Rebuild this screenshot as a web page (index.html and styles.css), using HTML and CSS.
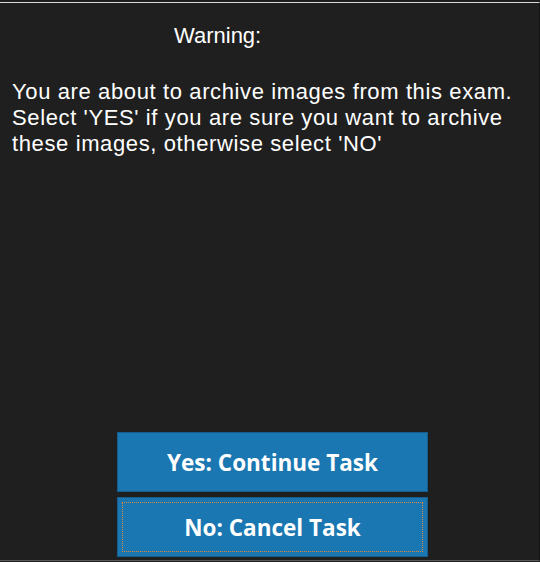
FILE: index.html
```html
<!DOCTYPE html>
<html>
<head>
<meta charset="utf-8">
<link rel="stylesheet" href="styles.css">
</head>
<body>
<div class="frame">
  <div class="title">Warning:</div>
  <div class="message">You are about to archive images from this exam.<br>Select 'YES' if you are sure you want to archive<br>these images, otherwise select 'NO'</div>
  <div class="actions">
    <button class="btn">Yes: Continue Task</button>
    <button class="btn focused">No: Cancel Task</button>
  </div>
</div>
</body>
</html>
```
FILE: styles.css
```css
html, body {
  margin: 0;
  padding: 0;
  background: #1e1e1e;
}
body {
  width: 540px;
  height: 562px;
  overflow: hidden;
  padding-top: 2px;
  box-sizing: border-box;
}
.frame {
  box-sizing: border-box;
  height: 559px;
  border-top: 1px solid #d8d8d8;
  border-right: 1px solid #121212;
  border-bottom: 1px solid #5a5a5a;
  background: #1f1f1f;
  display: flex;
  flex-direction: column;
  padding: 20px 0 3px 0;
  font-family: "Liberation Sans", Arial, sans-serif;
  color: #ffffff;
}
.title {
  font-size: 22px;
  line-height: 26px;
  padding-left: 174px;
}
.message {
  margin-top: 30px;
  padding-left: 12px;
  font-size: 22px;
  line-height: 26px;
  letter-spacing: 0.62px;
  white-space: nowrap;
}
.actions {
  margin-top: auto;
  margin-left: 117px;
  width: 311px;
  display: flex;
  flex-direction: column;
  gap: 5px;
}
.btn {
  box-sizing: border-box;
  height: 60px;
  width: 311px;
  background: #1a77b1;
  border: 1px solid #155d8c;
  color: #ffffff;
  font-family: "Open Sans", "Noto Sans", sans-serif;
  font-weight: 700;
  font-size: 22.5px;
  padding: 0;
  margin: 0;
}
.focused {
  outline: 1px dotted #e0893a;
  outline-offset: -6px;
}
```
